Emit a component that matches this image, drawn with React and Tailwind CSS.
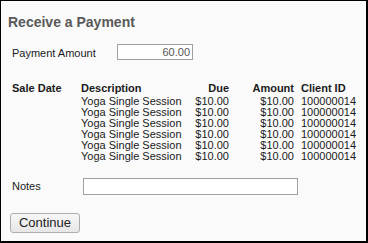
import React from "react";

// sample rows
const rows = Array.from({ length: 6 }, () => ({
  saleDate: "",
  description: "Yoga Single Session",
  due: "$10.00",
  amount: "$10.00",
  clientId: "100000014",
}));

export default function App() {
  return (
    <div
      className="w-[368px] h-[243px] bg-[#fafafa] border-t border-l border-r-2 border-b-2 border-black text-[#1a1a1a] overflow-hidden"
      style={{ fontFamily: '"Liberation Sans", Arial, sans-serif' }}
    >
      {/* Title */}
      <h1 className="mt-[13px] pl-[7px] text-[14px] leading-[16px] font-bold text-[#595959]">
        Receive a Payment
      </h1>

      {/* Payment amount */}
      <div className="mt-[14px] pl-[11px] flex items-center h-[16px]">
        <span className="w-[105px] text-[11px] leading-[16px] pt-[1px]">
          Payment Amount
        </span>
        <input
          readOnly
          value="60.00"
          className="w-[76px] h-[16px] border border-[#a0a0a0] bg-white text-right pr-[2px] text-[11px] leading-[14px] text-[#555] outline-none"
        />
      </div>

      {/* Line items */}
      <div className="mt-[21px] pl-[11px] grid grid-cols-[69px_110px_38px_65px_64px] text-[11px]">
        <div className="font-bold leading-[15px]">Sale Date</div>
        <div className="font-bold leading-[15px]">Description</div>
        <div className="font-bold leading-[15px] text-right">Due</div>
        <div className="font-bold leading-[15px] text-right">Amount</div>
        <div className="font-bold leading-[15px] pl-[7px] whitespace-nowrap">Client ID</div>
        {rows.map((r, i) => (
          <React.Fragment key={i}>
            <div className="leading-[11px]">{r.saleDate}</div>
            <div className="leading-[11px] whitespace-nowrap">{r.description}</div>
            <div className="leading-[11px] text-right">{r.due}</div>
            <div className="leading-[11px] text-right">{r.amount}</div>
            <div className="leading-[11px] pl-[7px]">{r.clientId}</div>
          </React.Fragment>
        ))}
      </div>

      {/* Notes */}
      <div className="mt-[16px] pl-[11px] flex items-center h-[17px]">
        <span className="w-[71px] text-[11px] leading-[17px]">Notes</span>
        <input
          readOnly
          className="w-[215px] h-[17px] border border-[#a0a0a0] bg-white outline-none"
        />
      </div>

      {/* Submit */}
      <button className="mt-[18px] ml-[9px] w-[70px] h-[20px] border border-[#adadad] rounded-[3px] bg-gradient-to-b from-[#f7f7f7] to-[#e6e6e6] text-[13px] leading-[18px] text-[#222]">
        Continue
      </button>
    </div>
  );
}
